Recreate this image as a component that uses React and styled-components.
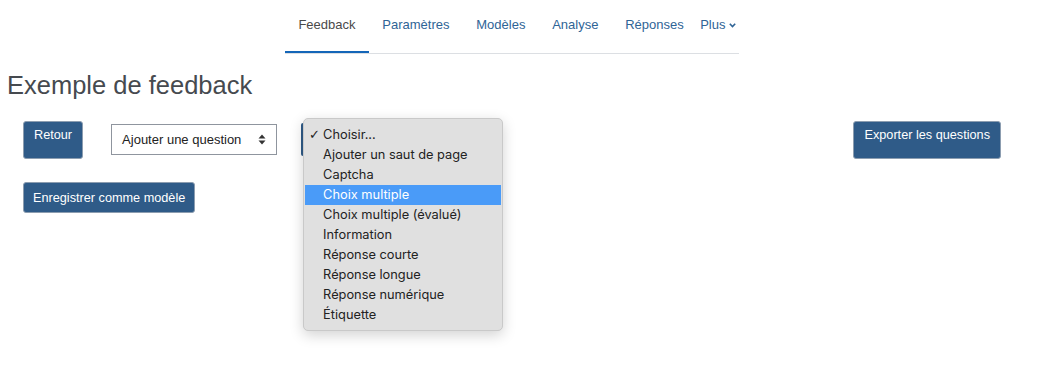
import styled, { createGlobalStyle } from 'styled-components'

// ── GLOBAL ──
const Global = createGlobalStyle`
  html, body { margin: 0; padding: 0; background: #fff; }
  body { font-family: 'Liberation Sans', Arial, sans-serif; }
  #root { min-height: 100vh; }
`

// ── NAV ──
const Nav = styled.ul`
  display: flex;
  list-style: none;
  margin: 0 0 0 285px;
  padding: 0;
  width: 454px;
  border-bottom: 1px solid #dcdfe3;
`

const Tab = styled.li`
  padding-top: 17px;
  padding-bottom: 18px;
  padding-right: ${({ $tight }) => ($tight ? '0' : '13.4px')};
  padding-left: ${({ $tight }) => ($tight ? '3px' : '13.4px')};
  font-size: 13px;
  line-height: 16px;
  color: ${({ $active }) => ($active ? '#4a4a4a' : '#2f6496')};
  border-bottom: 2px solid ${({ $active }) => ($active ? '#1466b8' : 'transparent')};
  display: flex;
  align-items: center;
  gap: 4px;
  white-space: nowrap;
`

// ── CONTENT ──
const Title = styled.h2`
  margin: 16px 0 0;
  padding-left: 7px;
  font-size: 25.5px;
  line-height: 30px;
  font-weight: 400;
  color: #464a4f;
`

const Row = styled.div`
  display: flex;
  align-items: flex-start;
  padding: 0 62px 0 23px;
  margin-top: ${({ $top }) => $top}px;
`

const Btn = styled.button`
  font-family: 'Liberation Sans', Arial, sans-serif;
  font-size: 12.7px;
  line-height: 16px;
  color: #fff;
  background: #2f5b88;
  border: 1px solid #8c9db0;
  border-radius: 3px;
  padding: ${({ $tall }) => ($tall ? '5px 10px 15px' : '7px 9px')};
  height: ${({ $tall }) => ($tall ? '38px' : '31px')};
  margin-left: ${({ $push }) => ($push ? 'auto' : '0')};
  display: flex;
  align-items: flex-start;
  justify-content: center;
  white-space: nowrap;
`

const Select = styled.div`
  margin: 3px 0 0 28px;
  width: 166px;
  height: 31px;
  box-sizing: border-box;
  border: 1px solid #8f959e;
  background: #fff;
  display: flex;
  align-items: center;
  justify-content: space-between;
  padding: 0 10px 0 10px;
  font-size: 13px;
  color: #222;
`

const MenuAnchor = styled.div`
  position: relative;
  margin: 2px 0 0 24px;
`

const HiddenSelect = styled.div`
  width: 190px;
  height: 33px;
  background: #2f5b88;
  border-radius: 2px;
`

const Popup = styled.ul`
  position: absolute;
  left: 2px;
  top: -5px;
  width: 200px;
  box-sizing: border-box;
  margin: 0;
  padding: 6px 1px 5px;
  list-style: none;
  background: #e0e0e0;
  border: 1px solid #c9c9c9;
  border-radius: 5px;
  box-shadow: 0 4px 14px rgba(0, 0, 0, 0.18);
  z-index: 5;
`

const Item = styled.li`
  position: relative;
  height: 20px;
  line-height: 20px;
  padding-left: 18px;
  font-family: Inter, 'Noto Sans', sans-serif;
  font-size: 12.8px;
  color: ${({ $hi }) => ($hi ? '#fff' : '#222')};
  background: ${({ $hi }) => ($hi ? '#4a9bf8' : 'transparent')};
  white-space: nowrap;
`

const Check = styled.span`
  position: absolute;
  left: 4px;
  top: 0;
  font-family: 'DejaVu Sans', sans-serif;
  font-size: 13px;
`

const options = [
  'Choisir...',
  'Ajouter un saut de page',
  'Captcha',
  'Choix multiple',
  'Choix multiple (évalué)',
  'Information',
  'Réponse courte',
  'Réponse longue',
  'Réponse numérique',
  'Étiquette',
]

const tabs = ['Feedback', 'Paramètres', 'Modèles', 'Analyse', 'Réponses']

export default function App() {
  return (
    <>
      <Global />
      <Nav>
        {tabs.map((t, i) => (
          <Tab key={t} $active={i === 0}>{t}</Tab>
        ))}
        <Tab $tight>
          Plus
          <svg width="7" height="5" viewBox="0 0 7 5" fill="none" stroke="#2f6496" strokeWidth="1.6">
            <polyline points="0.8,0.8 3.5,3.6 6.2,0.8" />
          </svg>
        </Tab>
      </Nav>

      <Title>Exemple de feedback</Title>

      <Row $top={21}>
        <Btn $tall>Retour</Btn>
        <Select>
          Ajouter une question
          <svg width="8" height="11" viewBox="0 0 8 11" fill="#333">
            <polygon points="4,0.5 7.5,4.5 0.5,4.5" />
            <polygon points="4,10.5 7.5,6.5 0.5,6.5" />
          </svg>
        </Select>
        <MenuAnchor>
          <HiddenSelect />
          <Popup>
            {options.map((o, i) => (
              <Item key={o} $hi={i === 3}>
                {i === 0 && <Check>✓</Check>}
                {o}
              </Item>
            ))}
          </Popup>
        </MenuAnchor>
        <Btn $tall $push>Exporter les questions</Btn>
      </Row>

      <Row $top={23}>
        <Btn>Enregistrer comme modèle</Btn>
      </Row>
    </>
  )
}
